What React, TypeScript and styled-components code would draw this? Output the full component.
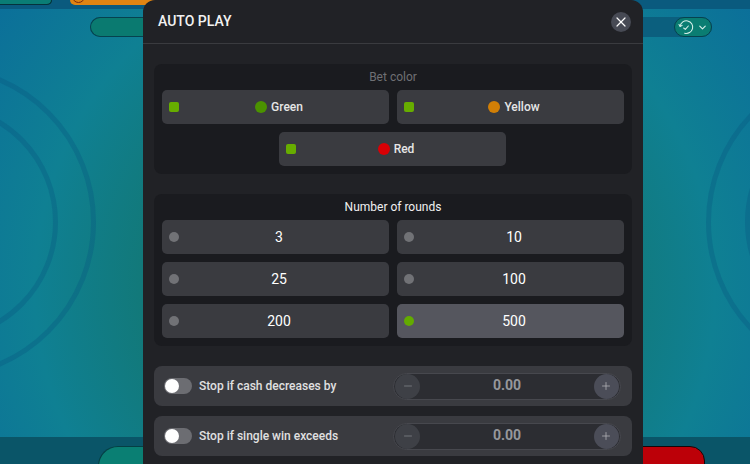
import styled, { createGlobalStyle } from "styled-components";
import { ChevronDown, Minus, Plus, X } from "lucide-react";

const colors = [
  { name: "Green", dot: "#4b9200" },
  { name: "Yellow", dot: "#d17f06" },
  { name: "Red", dot: "#d90005" },
];

const rounds = [3, 10, 25, 100, 200, 500];
const stops = ["Stop if cash decreases by", "Stop if single win exceeds"];

function App() {
  return (
    <>
      <GlobalStyle />
      <Page>
        <TopStrip>
          <TopPill />
          <TopPill $accent>
            <PlayerMark />
          </TopPill>
        </TopStrip>
        <GameBar>
          <BarTrack>
            <BarLabel />
            <HistoryPill>
              <svg width="16" height="16" viewBox="0 0 24 24" fill="none" stroke="#d5efe9" strokeWidth="1.6" strokeLinecap="round" strokeLinejoin="round">
                <path d="M3.2 10.5A9.5 9.5 0 1 1 10 21.3" />
                <path d="M1.5 8.2l1.7 3 3-1.6" />
                <path d="M8.5 13.5l2.5 2 4.5-5" />
              </svg>
              <ChevronDown size={11} color="#d5efe9" strokeWidth={2.5} />
            </HistoryPill>
          </BarTrack>
        </GameBar>
        <Stage>
          <Ring $side="left" $size={314} $edge={96} />
          <Ring $side="left" $size={238} $edge={58} />
          <Ring $side="right" $size={314} $edge={44} />
          <Ring $side="right" $size={238} $edge={5} />
        </Stage>
        <BottomBar>
          <GreenBet />
          <RedBet />
        </BottomBar>

        <Modal>
          <ModalHeader>
            <ModalTitle>AUTO PLAY</ModalTitle>
            <CloseButton>
              <X size={16} color="#fff" strokeWidth={1.8} />
            </CloseButton>
          </ModalHeader>
          <ModalBody>
            <Panel>
              <PanelTitle $muted>Bet color</PanelTitle>
              <ColorGrid>
                {colors.map((color) => (
                  <OptionButton key={color.name}>
                    <CheckSquare />
                    <ColorDot $color={color.dot} />
                    <ColorLabel>{color.name}</ColorLabel>
                  </OptionButton>
                ))}
              </ColorGrid>
            </Panel>

            <Panel>
              <PanelTitle>Number of rounds</PanelTitle>
              <RoundsGrid>
                {rounds.map((round) => (
                  <OptionButton key={round} $active={round === 500}>
                    <RadioDot $active={round === 500} />
                    <RoundLabel>{round}</RoundLabel>
                  </OptionButton>
                ))}
              </RoundsGrid>
            </Panel>

            <StopList>
              {stops.map((stop) => (
                <StopRow key={stop}>
                  <Toggle>
                    <ToggleKnob />
                  </Toggle>
                  <StopLabel>{stop}</StopLabel>
                  <Stepper>
                    <StepButton>
                      <Minus size={12} color="#84868c" strokeWidth={1.5} />
                    </StepButton>
                    <StepValue>0.00</StepValue>
                    <StepButton $raised>
                      <Plus size={12} color="#b5b6ba" strokeWidth={1.5} />
                    </StepButton>
                  </Stepper>
                </StopRow>
              ))}
            </StopList>
          </ModalBody>
        </Modal>
      </Page>
    </>
  );
}

const GlobalStyle = createGlobalStyle`
  html, body {
    margin: 0;
    height: 100%;
    overflow: hidden;
  }

  #root {
    height: 100%;
  }

  * {
    box-sizing: border-box;
  }
`;

const Page = styled.div`
  position: relative;
  height: 100%;
  display: flex;
  flex-direction: column;
  overflow: hidden;
  font-family: Roboto, "Liberation Sans", sans-serif;
  background: radial-gradient(circle at 50% 62%, #0c7d5c 0, #12797a 235px, #0f8093 340px, #0b6e9a 480px);
`;

const TopStrip = styled.div`
  height: 9px;
  flex-shrink: 0;
  display: flex;
  gap: 18px;
  background: #0a5a7e;
`;

const TopPill = styled.div<{ $accent?: boolean }>`
  width: ${(p) => (p.$accent ? "90px" : "52px")};
  height: 5px;
  overflow: hidden;
  border-radius: ${(p) => (p.$accent ? "0 0 8px 8px" : "0 0 8px 0")};
  background: ${(p) => (p.$accent ? "#e08412" : "#0a7d75")};
  box-shadow: ${(p) => (p.$accent ? "none" : "inset 0 -1px 0 #05323c, inset -1px 0 0 #05323c")};
`;

const PlayerMark = styled.div`
  width: 13px;
  height: 13px;
  margin: -10px 0 0 2px;
  border-radius: 50%;
  background: #e08412;
  border: 1px solid #7a2a10;
`;

const GameBar = styled.div`
  height: 36px;
  flex-shrink: 0;
  padding: 8px 38px 0 90px;
`;

const BarTrack = styled.div`
  height: 20px;
  display: flex;
  justify-content: space-between;
  border-radius: 10px;
  background: #0b5f7e;
`;

const BarLabel = styled.div`
  width: 70px;
  height: 20px;
  border-radius: 10px 0 0 10px;
  background: #0a7a70;
  border: 1px solid #06424f;
  border-right: none;
`;

const HistoryPill = styled.div`
  width: 38px;
  height: 20px;
  display: flex;
  align-items: center;
  justify-content: center;
  gap: 3px;
  border-radius: 10px;
  background: #0a7d72;
  border: 1px solid #06424f;
`;

const Stage = styled.div`
  position: relative;
  flex: 1;
  overflow: hidden;
`;

const Ring = styled.div<{ $side: "left" | "right"; $size: number; $edge: number }>`
  position: absolute;
  top: ${(p) => 177 - p.$size / 2}px;
  ${(p) => p.$side}: ${(p) => p.$edge - p.$size}px;
  width: ${(p) => p.$size}px;
  height: ${(p) => p.$size}px;
  border-radius: 50%;
  border: 5px solid rgba(8, 90, 130, 0.35);
`;

const BottomBar = styled.div`
  height: 27px;
  flex-shrink: 0;
  display: flex;
  justify-content: space-between;
  padding: 9px 45px 0 98px;
  background: #0a5568;
`;

const GreenBet = styled.div`
  width: 120px;
  height: 30px;
  border-radius: 20px 0 0 0;
  background: #0a7f73;
  border-top: 1px solid #053f44;
  border-left: 1px solid #053f44;
`;

const RedBet = styled.div`
  width: 120px;
  height: 30px;
  border-radius: 0 15px 0 0;
  background: #bc0008;
  border: 1.5px solid #14080a;
`;

const Modal = styled.div`
  position: absolute;
  top: 0;
  left: 143px;
  width: 500px;
  height: 100%;
  border-radius: 12px 12px 0 0;
  background: #212226;
`;

const ModalHeader = styled.div`
  height: 44px;
  display: flex;
  align-items: center;
  justify-content: space-between;
  padding: 0 12px 1px 15px;
  border-bottom: 1px solid #3a3b3f;
`;

const ModalTitle = styled.div`
  font-size: 14px;
  font-weight: 500;
  color: #f2f2f2;
`;

const CloseButton = styled.div`
  width: 20px;
  height: 20px;
  margin-top: 1px;
  display: flex;
  align-items: center;
  justify-content: center;
  border-radius: 50%;
  background: #474a54;
`;

const ModalBody = styled.div`
  padding: 20px 11px 0;
  display: flex;
  flex-direction: column;
  gap: 20px;
`;

const Panel = styled.section`
  padding: 6px 8px 8px;
  border-radius: 8px;
  background: #1a1b1f;
`;

const PanelTitle = styled.div<{ $muted?: boolean }>`
  height: 20px;
  line-height: 14px;
  text-align: center;
  font-size: 12px;
  font-weight: 400;
  color: ${(p) => (p.$muted ? "#6f7074" : "#f0f0f0")};
`;

const ColorGrid = styled.div`
  display: flex;
  flex-wrap: wrap;
  justify-content: center;
  gap: 8px;

  & > * {
    width: 227px;
  }

  & > :last-child {
    margin-right: 1px;
  }
`;

const RoundsGrid = styled.div`
  display: grid;
  grid-template-columns: 227px 227px;
  gap: 8px;
`;

const OptionButton = styled.div<{ $active?: boolean }>`
  position: relative;
  height: 34px;
  display: flex;
  align-items: center;
  justify-content: center;
  padding-left: 7px;
  border-radius: 5px;
  background: ${(p) => (p.$active ? "#55565e" : "#3a3b40")};
`;

const CheckSquare = styled.span`
  position: absolute;
  left: 7px;
  top: 12px;
  width: 10px;
  height: 10px;
  border-radius: 2px;
  background: #67ad00;
`;

const RadioDot = styled.span<{ $active?: boolean }>`
  position: absolute;
  left: 7px;
  top: 12px;
  width: 10px;
  height: 10px;
  border-radius: 50%;
  background: ${(p) => (p.$active ? "#63ab00" : "#717276")};
`;

const ColorDot = styled.span<{ $color: string }>`
  width: 12px;
  height: 12px;
  margin-right: 4px;
  border-radius: 50%;
  background: ${(p) => p.$color};
`;

const ColorLabel = styled.span`
  font-size: 12px;
  font-weight: 500;
  color: #e6e6e6;
`;

const RoundLabel = styled.span`
  font-size: 14px;
  font-weight: 450;
  color: #fff;
`;

const StopList = styled.div`
  display: flex;
  flex-direction: column;
  gap: 10px;
`;

const StopRow = styled.div`
  height: 40px;
  display: flex;
  align-items: center;
  padding: 0 11px 0 10px;
  border-radius: 8px;
  background: #3a3b40;
`;

const Toggle = styled.div`
  width: 28px;
  height: 16px;
  margin-right: 7px;
  padding: 1px;
  border-radius: 8px;
  background: #6c6d72;
`;

const ToggleKnob = styled.div`
  width: 14px;
  height: 14px;
  border-radius: 50%;
  background: #fff;
`;

const StopLabel = styled.div`
  flex: 1;
  font-size: 12px;
  font-weight: 500;
  color: #e0e0e0;
`;

const Stepper = styled.div`
  width: 228px;
  height: 27px;
  display: flex;
  align-items: center;
  justify-content: space-between;
  padding: 0 1px;
  border-radius: 14px;
  background: #2c2d32;
  border: 1px solid #47484e;
`;

const StepButton = styled.div<{ $raised?: boolean }>`
  width: 25px;
  height: 25px;
  display: flex;
  align-items: center;
  justify-content: center;
  border-radius: 50%;
  background: ${(p) => (p.$raised ? "#4b4d58" : "#3e4046")};
`;

const StepValue = styled.div`
  padding-bottom: 2px;
  font-size: 14px;
  font-weight: 700;
  color: #96979b;
`;

export default App;
